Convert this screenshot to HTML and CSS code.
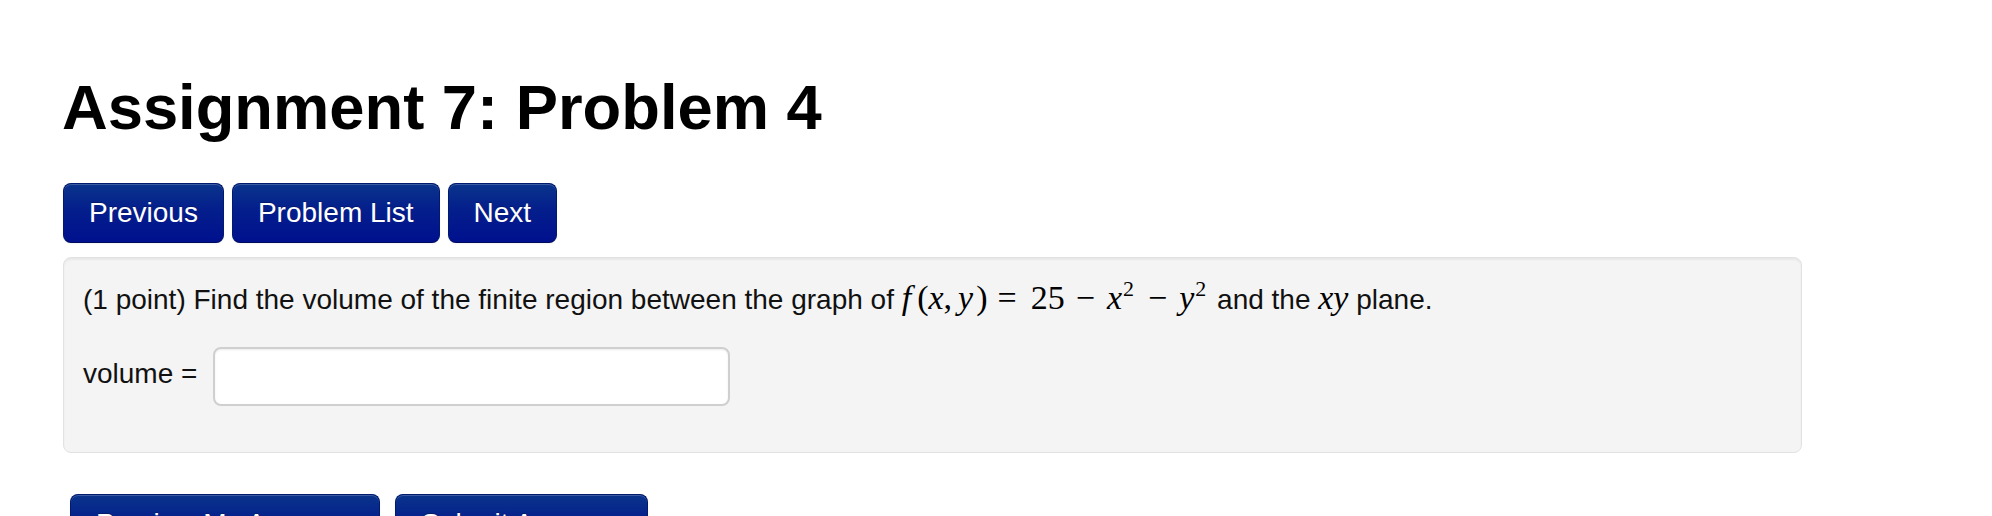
FILE: index.html
```html
<!DOCTYPE html>
<html lang="en">
<head>
<meta charset="utf-8">
<title>Assignment 7: Problem 4</title>
<link rel="stylesheet" href="styles.css">
</head>
<body>
<div class="page">
  <h1 class="title">Assignment 7: Problem 4</h1>
  <div class="nav">
    <a class="btn" href="#">Previous</a>
    <a class="btn" href="#">Problem List</a>
    <a class="btn" href="#">Next</a>
  </div>
  <div class="well">
    <p class="problem">(1 point) Find the volume of the finite region between the graph of <span class="math"><i class="m-f">f</i><span class="m-p">(</span><i>x</i><span class="m-c">,</span><i class="m-y">y</i><span>)</span><span class="m-eq">=</span><span>25</span><span class="m-op">&minus;</span><i>x</i><sup>2</sup><span class="m-op">&minus;</span><i>y</i><sup>2</sup></span> and the <span class="math"><i>xy</i></span> plane.</p>
    <div class="answer-row">
      <label class="answer-label" for="ans">volume =</label>
      <input class="answer-input" id="ans" type="text">
    </div>
  </div>
  <div class="submit-row">
    <button class="btn" type="button">Preview My Answers</button>
    <button class="btn" type="button">Submit Answers</button>
  </div>
</div>
</body>
</html>
```

FILE: styles.css
```css
html, body {
  margin: 0;
  padding: 0;
  background: #ffffff;
}

body {
  font-family: "Liberation Sans", Arial, Helvetica, sans-serif;
  font-size: 28px;
  line-height: 40px;
  color: #111111;
  overflow: hidden;
}

.page {
  width: 1739px;
  padding: 71px 0 0 63px;
}

.title {
  margin: 0 0 0 -1px;
  font-size: 63.3px;
  line-height: 72px;
  font-weight: bold;
  color: #000000;
}

.nav {
  display: flex;
  gap: 8px;
  margin-top: 40px;
}

.btn {
  display: inline-block;
  box-sizing: border-box;
  height: 60px;
  padding: 9px 25px;
  font-family: "Liberation Sans", Arial, Helvetica, sans-serif;
  font-size: 28px;
  line-height: 40px;
  color: #ffffff;
  text-decoration: none;
  text-shadow: 0 -1px 0 rgba(0, 0, 0, 0.25);
  background-color: #03198c;
  background-image: linear-gradient(to bottom, #0a348b 0%, #041e8c 45%, #00108e 100%);
  border: 1px solid #021a6e;
  border-bottom-color: #000c5e;
  border-radius: 8px;
  box-shadow: inset 0 1px 0 rgba(255, 255, 255, 0.2), 0 1px 2px rgba(0, 0, 0, 0.05);
  white-space: nowrap;
  cursor: pointer;
}

.well {
  margin-top: 14px;
  padding: 19px;
  background: #f4f4f4;
  border: 1px solid #e2e2e2;
  border-radius: 8px;
  box-shadow: inset 0 2px 2px rgba(0, 0, 0, 0.05);
}

.problem {
  margin: 0;
  padding-top: 3px;
  line-height: 40px;
  white-space: nowrap;
}

.math {
  font-family: "Liberation Serif", "Times New Roman", serif;
  font-size: 34px;
  line-height: 1;
  color: #000000;
}

.math i {
  font-style: italic;
}

.m-f {
  margin-right: 6px;
}

.m-c {
  margin-right: 6px;
}

.m-y {
  margin-right: 3px;
}

.m-eq {
  margin: 0 14px 0 10px;
}

.m-op {
  margin: 0 12px 0 11px;
}

.math sup {
  font-size: 22px;
  line-height: 0;
  vertical-align: 13px;
  margin-left: 1px;
  margin-right: 3px;
}

.answer-row {
  display: flex;
  align-items: flex-start;
  margin-top: 27px;
  margin-bottom: 27px;
}

.answer-label {
  margin-top: 7px;
  line-height: 40px;
}

.answer-input {
  box-sizing: border-box;
  width: 517px;
  height: 59px;
  margin: 0 0 0 16px;
  padding: 8px 12px;
  font-family: "Liberation Sans", Arial, sans-serif;
  font-size: 28px;
  background: #ffffff;
  border: 2px solid #cfcfcf;
  border-radius: 8px;
  box-shadow: inset 0 1px 2px rgba(0, 0, 0, 0.075);
  outline: none;
}

.submit-row {
  display: flex;
  gap: 15px;
  margin: 41px 0 0 7px;
}
```
